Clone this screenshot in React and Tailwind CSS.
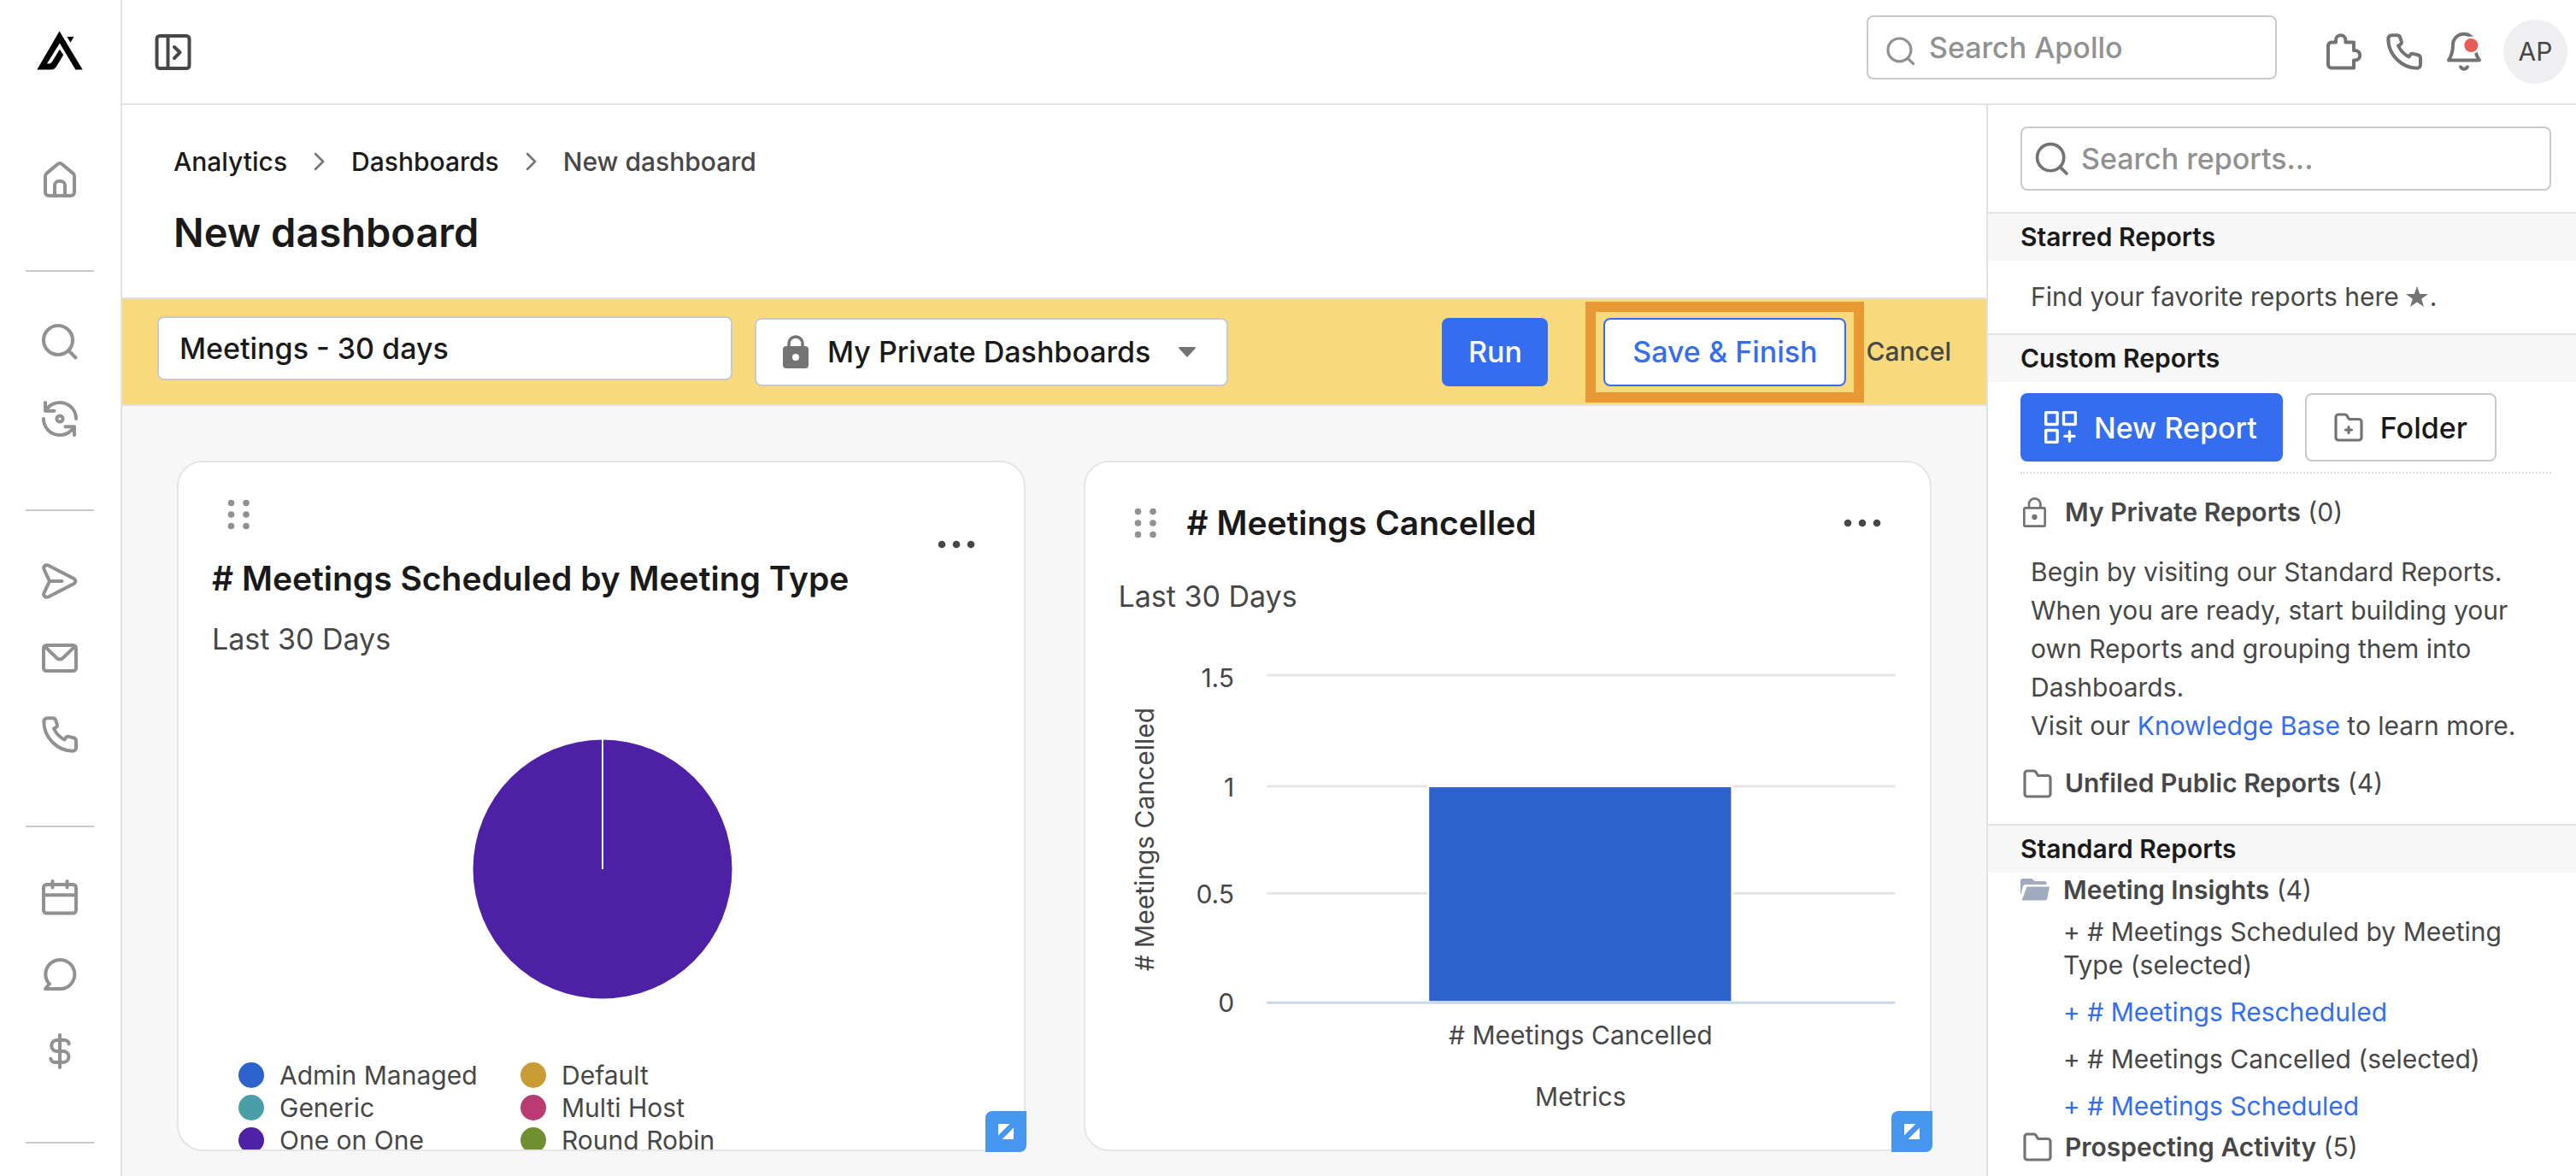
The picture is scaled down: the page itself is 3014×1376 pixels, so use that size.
import clsx from "clsx";

/* ---------- icons ---------- */

function Icon({ children, className, stroke = 4 }) {
  return (
    <svg
      viewBox="0 0 48 48"
      className={clsx("size-12 shrink-0", className)}
      fill="none"
      stroke="currentColor"
      strokeWidth={stroke}
      strokeLinecap="round"
      strokeLinejoin="round"
      aria-hidden="true"
    >
      {children}
    </svg>
  );
}

const PHONE_PATH =
  "M5.3 8.3a4 4 0 0 1 4-4h6.2a4 4 0 0 1 3.8 2.8l1.5 4.6a3 3 0 0 1-1.3 3.4l-2.5 1.4a28 28 0 0 0 12.5 13l1.5-2.4a3 3 0 0 1 3.2-1.2l5.8 1.4a4 4 0 0 1 3 3.9v7.5a4 4 0 0 1-4 4C21.2 42.7 5.3 27 5.3 8.3Z";

const icons = {
  home: (
    <>
      <path d="M7 20a4 4 0 0 1 1.5-3.1L21.5 6a4 4 0 0 1 5 0l13 10.9A4 4 0 0 1 41 20v19a4 4 0 0 1-4 4H11a4 4 0 0 1-4-4Z" />
      <path d="M18 43V31a5 5 0 0 1 5-5h2a5 5 0 0 1 5 5v12" />
    </>
  ),
  search: (
    <>
      <circle cx="22" cy="22" r="17" />
      <path d="m34.5 34.5 8 8" />
    </>
  ),
  sync: (
    <>
      <path d="M7 5v9.7h10.5M7.5 14.5A19 19 0 0 1 43 24" />
      <path d="M41 43v-9.7H30.5M40.5 33.5A19 19 0 0 1 5 24" />
      <circle cx="24" cy="24" r="3.6" />
    </>
  ),
  send: (
    <path d="M12 24 5.6 10.4C4 6.8 7.4 4.2 10.8 5.8L40 20.8c3 1.6 3 4.8 0 6.4L10.8 42.2C7.4 43.8 4 41.2 5.6 37.6ZM12 24h14.5" />
  ),
  mail: (
    <>
      <rect x="5" y="9" width="38" height="30" rx="3.5" />
      <path d="M6.5 10.5 20.5 24a5 5 0 0 0 7 0l14-13.5" />
    </>
  ),
  phone: <path d={PHONE_PATH} />,
  calendar: (
    <>
      <rect x="5" y="9" width="38" height="33.5" rx="3.5" />
      <path d="M5 21.3h38M15.5 5v7.5M32.5 5v7.5" />
    </>
  ),
  chat: <path d="m12 35-5 6h17a17 17 0 1 0-12.2-5.5Z" />,
  dollar: (
    <>
      <path d="M24 5v38" />
      <path d="M34.7 15.5a5 5 0 0 0-5-4.6H20A6.6 6.6 0 0 0 20 24h8a6.5 6.5 0 0 1 0 13h-9.7a5 5 0 0 1-5-4.2" />
    </>
  ),
  puzzle: (
    <path d="M5 16.5a4 4 0 0 1 4-4h5V10a5.7 5.7 0 0 1 11.4 0v2.5H35V22h1.5a5.7 5.7 0 0 1 0 11.4H35v9H9a4 4 0 0 1-4-4Z" />
  ),
  panel: (
    <>
      <rect x="5.5" y="5" width="38" height="38" rx="3.5" />
      <path d="M18.5 5v38M26 18l6.5 6.3L26 31" />
    </>
  ),
};

function Logo() {
  return (
    <svg viewBox="21 27 163 138" className="h-[46px] w-[54px]" role="img" aria-label="Apollo">
      <path d="M101 28 183 164H158L102 70 57 143H65Q71 143 75 136L102 92 115 112 92 150Q84 164 72 164H22Z" />
      <path d="M128 48H152L140 68Z" />
    </svg>
  );
}

function FolderIcon({ plus = false }) {
  return (
    <svg viewBox="0 0 34 34" className="size-[34px] shrink-0 text-[#737373]" fill="none" stroke="currentColor" strokeWidth="3.2" strokeLinejoin="round" strokeLinecap="round" aria-hidden="true">
      <path d="M2 5a3 3 0 0 1 3-3h7.500a3 3 0 0 1 2.500 1.400L17.500 7.500H29a3 3 0 0 1 3 3V29a3 3 0 0 1-3 3H5a3 3 0 0 1-3-3Z" />
      {plus && <path d="M17 16.500v7M13.500 20h7" />}
    </svg>
  );
}

function LockIcon() {
  return (
    <svg viewBox="30 372 81 105" className="h-[35px] w-[27px] shrink-0 text-[#737373]" fill="none" stroke="currentColor" strokeWidth="8" aria-hidden="true">
      <rect x="34" y="409" width="73" height="64" rx="4" />
      <path d="M51 408V395a20 19 0 0 1 40 0v13" />
      <circle cx="70.500" cy="441" r="9.500" fill="currentColor" stroke="none" />
    </svg>
  );
}

function OpenFolderIcon() {
  return (
    <svg viewBox="0 0 34 26" className="h-[26px] w-[34px] shrink-0" fill="#a1abbf" aria-hidden="true">
      <path d="M0 2.500A2.500 2.500 0 0 1 2.500 0H13l4 3H28a2.500 2.500 0 0 1 2.500 2.500V7H5.500a2.500 2.500 0 0 0-2.400 1.800L0 20Z" />
      <path d="M7.500 9.500H34L31.500 23a3 3 0 0 1-3 2.500H1.500Z" />
    </svg>
  );
}

function GridPlusIcon() {
  return (
    <svg viewBox="97 62 113 113" className="size-[38px] shrink-0" fill="none" stroke="currentColor" strokeWidth="10" strokeLinecap="round" aria-hidden="true">
      <rect x="102" y="67" width="40" height="41" rx="1" />
      <rect x="164" y="67" width="41" height="41" rx="1" />
      <rect x="102" y="129" width="40" height="41" rx="1" />
      <path d="M184.500 133v33M168 149.500h33" />
    </svg>
  );
}

function DragHandle() {
  return (
    <svg viewBox="0 0 26 36" className="h-9 w-[26px] shrink-0 cursor-grab" fill="#919191" aria-hidden="true">
      {[4.5, 18, 31.5].map((y) => (
        <g key={y}>
          <circle cx="4.500" cy={y} r="3.800" />
          <circle cx="22" cy={y} r="3.800" />
        </g>
      ))}
    </svg>
  );
}

/* ---------- left navigation ---------- */

const navGroups = [
  [["home", "Home"]],
  [["search", "Search"], ["sync", "Enrich"]],
  [["send", "Sequences"], ["mail", "Emails"], ["phone", "Calls"]],
  [["calendar", "Meetings"], ["chat", "Conversations"], ["dollar", "Deals"]],
  [],
];

function Sidebar() {
  return (
    <aside className="flex w-[143px] shrink-0 flex-col items-center border-r-2 border-[#e2e2e2] bg-white pt-9 pr-px">
      <Logo />
      <nav className="mt-[83px] flex w-20 flex-col text-[#919191]">
        {navGroups.map((group, i) => (
          <div key={i} className={clsx("flex flex-col items-center", i > 0 && "mt-[61px] border-t-2 border-[#c9c9c9] pt-[37px]")}>
            {group.map(([icon, label]) => (
              <a key={icon} href="#" aria-label={label} className="flex h-[90px] items-center">
                <Icon>{icons[icon]}</Icon>
              </a>
            ))}
          </div>
        ))}
      </nav>
    </aside>
  );
}

/* ---------- top bar ---------- */

function TopBar() {
  return (
    <header className="flex h-[123px] items-center border-b-2 border-[#e2e2e2] bg-white pr-2.5 pl-[35px]">
      <button aria-label="Expand sidebar" className="text-[#474747]">
        <Icon>{icons.panel}</Icon>
      </button>

      <label className="mr-[55px] mb-2.5 ml-auto flex h-[75px] w-[480px] items-center gap-[14px] rounded-lg border-2 border-[#c9c9c9] pl-[19px]">
        <Icon className="mt-2 size-[38px]! text-[#919191]">{icons.search}</Icon>
        <input
          type="text"
          aria-label="Search Apollo"
          placeholder="Search Apollo"
          className="w-full min-w-0 text-[34px] font-medium outline-none placeholder:text-[#919191]"
        />
      </label>

      <div className="flex items-center gap-[22px] text-[#737373]">
        <button aria-label="Extensions">
          <Icon>{icons.puzzle}</Icon>
        </button>
        <button aria-label="Dialer">
          <Icon>{icons.phone}</Icon>
        </button>
        <button aria-label="Notifications">
          <Icon>
            <path d="M6 33.500C9.500 28 11 22 11 15.500a12.800 12.800 0 0 1 25.600 0C36.600 22 38 28 42 33.500Z" />
            <path d="M20 41.300a4.600 4.600 0 0 0 8 0" />
            <circle cx="32.300" cy="16" r="10.500" fill="#fff" stroke="none" />
            <circle cx="32.300" cy="16" r="8" fill="#e85d5a" stroke="none" />
          </Icon>
        </button>
        <button className="flex size-[75px] items-center justify-center rounded-full bg-[#efeff1] text-[30px] text-[#474747]">
          AP
        </button>
      </div>
    </header>
  );
}

/* ---------- dashboard header ---------- */

function Crumb() {
  return (
    <svg viewBox="0 0 13 22" className="h-[22px] w-[13px]" fill="none" stroke="#737373" strokeWidth="2.500" strokeLinecap="round" strokeLinejoin="round" aria-hidden="true">
      <path d="m2 2 9 9-9 9" />
    </svg>
  );
}

function PageHeading() {
  return (
    <div className="bg-white pt-[46px] pb-12 pl-[60px] text-[#1a1a1a]">
      <nav className="flex items-center gap-[31px] text-[30px] leading-10 font-medium">
        <a href="#">Analytics</a>
        <Crumb />
        <a href="#">Dashboards</a>
        <Crumb />
        <span className="text-[#474747]">New dashboard</span>
      </nav>
      <h1 className="mt-[35px] text-[47px] leading-14 font-semibold">New dashboard</h1>
    </div>
  );
}

function EditBar() {
  return (
    <div className="flex h-[127px] items-center border-y-2 border-[#e0e0e0] bg-[#f8d97c] px-[41px] text-[34px] font-medium text-[#1a1a1a]">
      <input
        type="text"
        aria-label="Dashboard name"
        defaultValue="Meetings - 30 days"
        className="mb-2 h-[75px] w-[673px] rounded-lg border-2 border-[#c9c9c9] bg-white px-6 outline-none"
      />

      <label className="ml-[26px] flex h-20 w-[554px] items-center rounded-lg border-2 border-[#c9c9c9] bg-white pr-9 pl-[31px]">
        <svg viewBox="0 0 30 40" className="mr-[22px] h-10 w-[30px] shrink-0" aria-hidden="true">
          <path d="M7 15V10a8 8 0 0 1 16 0v5" fill="none" stroke="#737373" strokeWidth="3.500" />
          <rect y="13" width="30" height="26" rx="4" fill="#737373" />
          <circle cx="15" cy="26" r="4" fill="#fff" />
        </svg>
        <select aria-label="Dashboard folder" className="w-full min-w-0 appearance-none outline-none">
          <option>My Private Dashboards</option>
        </select>
        <svg viewBox="0 0 20 12" className="h-3 w-5 shrink-0" fill="#737373" aria-hidden="true">
          <path d="M1 0h18a1 1 0 0 1 .7 1.600l-9 9.700a1 1 0 0 1-1.400 0l-9-9.700A1 1 0 0 1 1 0Z" />
        </svg>
      </label>

      <button className="ml-auto h-20 w-[124px] rounded-lg bg-[#346df0] text-white">Run</button>
      <div className="ml-11 border-12 border-[#e99934] px-[9px] py-[7px]">
        <button className="h-20 w-[284px] rounded-lg border-2 border-[#346df0] bg-white text-[#346df0]">
          Save &amp; Finish
        </button>
      </div>
      <button className="ml-0.5 text-[30px] text-[#474747]">Cancel</button>
    </div>
  );
}

/* ---------- report cards ---------- */

function ReportCard({ title, stacked = false, children }) {
  return (
    <article className="relative h-[808px] rounded-[30px] border-2 border-[#e5e5e5] bg-white">
      <div className="flex h-full flex-col overflow-hidden rounded-[28px] pt-7">
        <div className="flex items-center justify-between pr-[57px] pl-[39px]">
          <div className={clsx("flex", stacked ? "flex-col gap-[14px]" : "h-[86px] items-center gap-9")}>
            <div className={clsx("flex items-center pl-[18px]", stacked && "h-[66px]")}>
              <DragHandle />
            </div>
            <h2 className="text-[39px] leading-14 font-semibold text-[#1a1a1a]">{title}</h2>
          </div>
          <button aria-label="Report options">
            <svg viewBox="0 0 44 10" className="h-2.5 w-11" fill="#474747" aria-hidden="true">
              <circle cx="5" cy="5" r="4.300" />
              <circle cx="22" cy="5" r="4.300" />
              <circle cx="39" cy="5" r="4.300" />
            </svg>
          </button>
        </div>
        <p className="mt-[19px] pl-[39px] text-[34px] leading-12 text-[#474747]">Last 30 Days</p>
        {children}
      </div>
      <button
        aria-label="Resize report"
        className="absolute -right-[3px] -bottom-[3px] flex size-12 cursor-nwse-resize items-center justify-center rounded-tl-lg rounded-br-lg bg-[#4796ef]"
      >
        <svg viewBox="0 0 20 20" className="size-5" fill="#fff" aria-hidden="true">
          <path d="M1 1h13.500L1 14.500ZM19 19H5.500L19 5.500Z" />
        </svg>
      </button>
    </article>
  );
}

const meetingTypes = [
  { name: "Admin Managed", dot: "bg-[#2d61cc]" },
  { name: "Default", dot: "bg-[#c99b34]" },
  { name: "Generic", dot: "bg-[#4a9ea8]" },
  { name: "Multi Host", dot: "bg-[#ba3a74]" },
  { name: "One on One", dot: "bg-[#4d20a6]" },
  { name: "Round Robin", dot: "bg-[#6f8f31]" },
];

function PieReport() {
  return (
    <>
      <svg viewBox="0 0 304 304" className="mt-[93px] ml-1 size-[304px] shrink-0 self-center" role="img" aria-label="One on One: 100%">
        <circle cx="152" cy="152" r="151.500" fill="#4d20a6" />
        <path d="M152 0v152" stroke="#fff" strokeWidth="2" />
      </svg>
      <ul className="mt-[70px] grid grid-cols-[330px_330px] pl-[70px] text-[30px] leading-[38px] text-[#474747]">
        {meetingTypes.map((t) => (
          <li key={t.name} className="flex items-center gap-[18px]">
            <span className={clsx("size-[30px] rounded-full", t.dot)} />
            {t.name}
          </li>
        ))}
      </ul>
    </>
  );
}

const ticks = [
  { label: "1.5", y: 68, base: 82 },
  { label: "1", y: 198, base: 210 },
  { label: "0.5", y: 323, base: 335 },
];

function BarReport() {
  return (
    <svg viewBox="0 0 988 622" className="w-full shrink-0 text-[30px]" fill="#474747" role="img" aria-label="# Meetings Cancelled: 1">
      {ticks.map((t) => (
        <g key={t.label}>
          <path d={`M212 ${t.y}H947`} stroke="#e6e6e6" strokeWidth="3" />
          <text x="174" y={t.base} textAnchor="end">{t.label}</text>
        </g>
      ))}
      <rect x="401" y="198" width="355" height="252" fill="#2d61cc" stroke="#fff" strokeWidth="2" />
      <path d="M212 451H947" stroke="#ccd6eb" strokeWidth="3" />
      <text x="174" y="462" textAnchor="end">0</text>
      <text x="579" y="500" textAnchor="middle">
        # Meetings Cancelled
      </text>
      <text x="579" y="572" textAnchor="middle">
        Metrics
      </text>
      <text x="80" y="260" textAnchor="middle" transform="rotate(-90 80 260)">
        # Meetings Cancelled
      </text>
    </svg>
  );
}

/* ---------- reports panel ---------- */

const meetingInsights = [
  { name: "# Meetings Scheduled by Meeting Type", selected: true },
  { name: "# Meetings Rescheduled", selected: false },
  { name: "# Meetings Cancelled", selected: true },
  { name: "# Meetings Scheduled", selected: false },
];

function PanelHeading({ children }) {
  return (
    <h3 className="border-t-2 border-[#e2e2e2] bg-[#f7f7f7] pl-[38px] leading-[55px] font-semibold text-[#1a1a1a]">
      {children}
    </h3>
  );
}

function FolderRow({ icon, name, count, className }) {
  return (
    <button className={clsx("flex items-center text-left", className)}>
      <span className="flex w-[52px] items-center pl-[3px]">{icon}</span>
      <span>
        <span className="font-semibold">{name}</span> ({count})
      </span>
    </button>
  );
}

function ReportsPanel() {
  return (
    <aside className="w-[690px] shrink-0 border-l-2 border-[#e2e2e2] bg-white text-[30px] leading-[45px] text-[#474747]">
      <div className="py-[25px] pr-[29px] pl-[38px]">
        <label className="flex h-[75px] items-center gap-3 rounded-lg border-2 border-[#c9c9c9] pl-[13px]">
          <Icon className="size-11! text-[#737373]">{icons.search}</Icon>
          <input
            type="text"
            aria-label="Search reports"
            placeholder="Search reports..."
            className="w-full min-w-0 text-[34px] font-medium outline-none placeholder:text-[#919191]"
          />
        </label>
      </div>

      <PanelHeading>Starred Reports</PanelHeading>
      <p className="flex items-center py-5 pl-[50px]">
        Find your favorite reports here
        <svg viewBox="0 0 26 25" className="mr-0.5 ml-2 h-[25px] w-[26px]" fill="#737373" aria-hidden="true">
          <path d="m13 0 3.200 9H26l-7.800 5.800L21 24l-8-5.600L5 24l2.800-9.200L0 9h9.800Z" />
        </svg>
        .
      </p>

      <PanelHeading>Custom Reports</PanelHeading>
      <div className="pt-[13px] pr-[29px] pb-[25px] pl-[38px]">
        <div className="flex gap-[26px] text-[34px] font-medium">
          <button className="flex h-20 items-center gap-5 rounded-lg bg-[#346df0] pr-[30px] pl-7 text-white">
            <GridPlusIcon />
            New Report
          </button>
          <button className="flex h-20 items-center gap-5 rounded-lg border-2 border-[#c9c9c9] px-8 text-[#1a1a1a]">
            <FolderIcon plus />
            Folder
          </button>
        </div>
        <hr className="mt-3 border-t-2 border-dotted border-[#dcdcdc]" />

        <FolderRow icon={<LockIcon />} name="My Private Reports" count={0} className="mt-[23px]" />
        <p className="mt-[25px] mb-[22px] pl-3">
          Begin by visiting our Standard Reports. When you are ready, start building your own Reports and grouping them into Dashboards.
          <br />
          Visit our{" "}
          <a href="#" className="text-[#346df0]">
            Knowledge Base
          </a>{" "}
          to learn more.
        </p>
        <FolderRow icon={<FolderIcon />} name="Unfiled Public Reports" count={4} />
      </div>

      <PanelHeading>Standard Reports</PanelHeading>
      <div className="pr-[29px] pl-[38px] leading-10">
        <button className="flex items-center gap-4 text-left">
          <OpenFolderIcon />
          <span>
            <span className="font-semibold">Meeting Insights</span> (4)
          </span>
        </button>
        <ul className="mt-2.5 mb-2 flex flex-col gap-4 pl-[50px] leading-[39px]">
          {meetingInsights.map((r) => (
            <li key={r.name}>
              {r.selected ? (
                `+ ${r.name} (selected)`
              ) : (
                <a href="#" className="text-[#346df0]">
                  {`+ ${r.name}`}
                </a>
              )}
            </li>
          ))}
        </ul>
        <FolderRow icon={<FolderIcon />} name="Prospecting Activity" count={5} />
      </div>
    </aside>
  );
}

export default function App() {
  return (
    <div className="flex min-h-screen bg-white font-['Inter',sans-serif]">
      <Sidebar />
      <div className="flex min-w-0 flex-1 flex-col">
        <TopBar />
        <div className="flex flex-1">
          <main className="flex min-w-0 flex-1 flex-col bg-[#f7f7f7]">
            <PageHeading />
            <EditBar />
            <div className="grid grid-cols-2 gap-[68px] px-16 pt-16">
              <ReportCard title="# Meetings Scheduled by Meeting Type" stacked>
                <PieReport />
              </ReportCard>
              <ReportCard title="# Meetings Cancelled">
                <BarReport />
              </ReportCard>
            </div>
          </main>
          <ReportsPanel />
        </div>
      </div>
    </div>
  );
}
